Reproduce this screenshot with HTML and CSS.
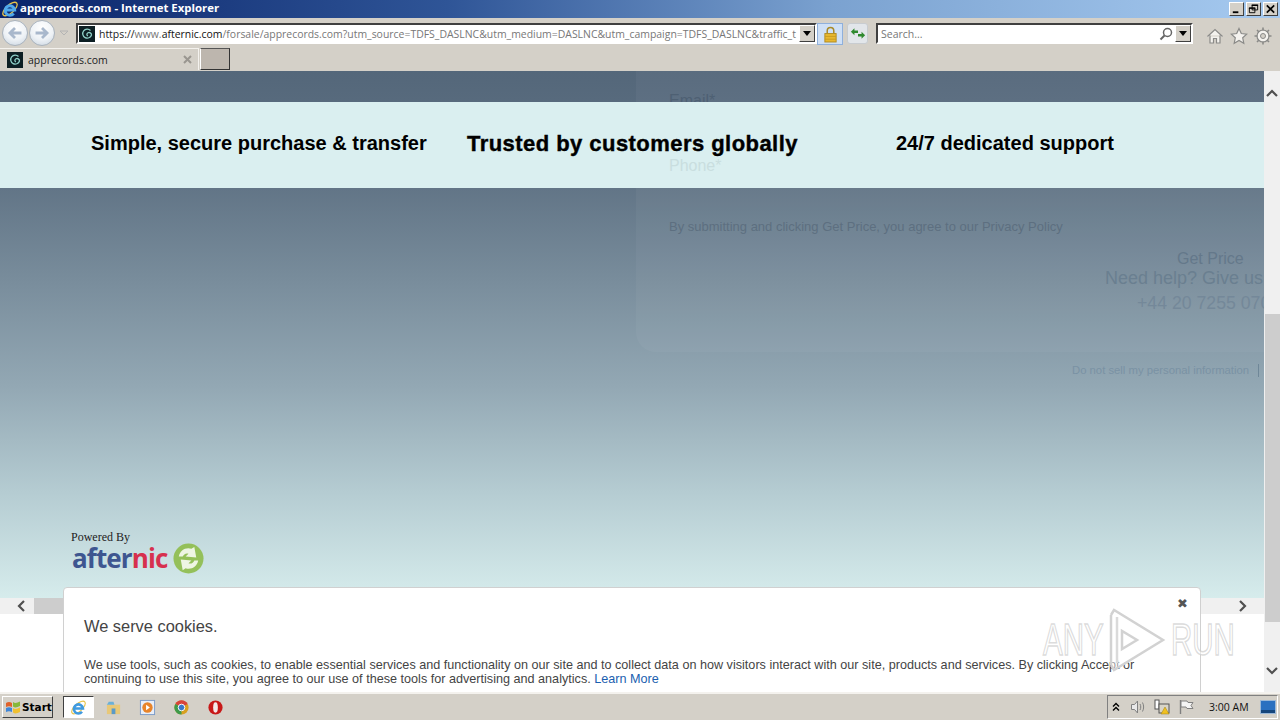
FILE: index.html
```html
<!DOCTYPE html>
<html lang="en">
<head>
<meta charset="utf-8">
<title>apprecords.com - Internet Explorer</title>
<link rel="stylesheet" href="styles.css">
</head>
<body>
<div class="window">
  <header class="titlebar">
    <svg class="ie-logo" viewBox="0 0 18 18"><ellipse cx="9" cy="9" rx="9" ry="4" transform="rotate(-42 9 9)" fill="none" stroke="#e6c34a" stroke-width="1.300"/><path d="M4.500 10h9.200A4.800 4.800 0 1 0 12.700 13.500" fill="none" stroke="#4fa8ec" stroke-width="2.900"/></svg>
    <span class="title-text">apprecords.com - Internet Explorer</span>
    <div class="winbtns">
      <span class="winbtn"><svg viewBox="0 0 14 13"><rect x="3" y="9" width="6" height="2" fill="#000"/></svg></span>
      <span class="winbtn"><svg viewBox="0 0 14 13"><path d="M5.500 2.500h6v5h-6zM2.500 5.500h6v5h-6z" fill="#d4d0c8" stroke="#000"/><path d="M5 2.500h7M2 5.500h7" stroke="#000" stroke-width="1.500"/></svg></span>
      <span class="winbtn"><svg viewBox="0 0 14 13"><path d="M3 2.500l8 8M11 2.500l-8 8" stroke="#000" stroke-width="1.800"/></svg></span>
    </div>
  </header>

  <div class="navbar">
    <div class="navbtns">
      <span class="navcircle"><svg viewBox="0 0 26 26"><path d="M20 13H8M13 7.500L7.500 13l5.500 5.500" fill="none" stroke="#a9b8cc" stroke-width="3"/></svg></span>
      <span class="navcircle"><svg viewBox="0 0 26 26"><path d="M6 13h12M13 7.500l5.500 5.500-5.500 5.500" fill="none" stroke="#a9b8cc" stroke-width="3"/></svg></span>
      <svg class="nav-drop" viewBox="0 0 10 6"><path d="M1 1l4 4 4-4z" fill="#d4d0c8" stroke="#b4b4b4"/></svg>
    </div>
    <div class="addressbox">
      <svg class="favicon" viewBox="0 0 16 16"><rect width="16" height="16" fill="#0d1f24"/><path d="M11.500 4.500A4.500 4.500 0 1 0 12.500 9c0-2-2-3-3.500-2.200S7.500 9.500 9 10" fill="none" stroke="#8fd0c8" stroke-width="1.300"/></svg>
      <div class="url"><span class="url-scheme">https://</span><span class="url-dim">www.</span><span class="url-dom">afternic.com</span><span class="url-dim">/forsale/apprecords.com?utm_source=TDFS_DASLNC&amp;utm_medium=DASLNC&amp;utm_campaign=TDFS_DASLNC&amp;traffic_t</span></div>
      <span class="dropbtn"><svg viewBox="0 0 8 5"><path d="M0 0h8L4 5z" fill="#000"/></svg></span>
    </div>
    <span class="lockbtn"><svg viewBox="0 0 16 18"><path d="M4.500 8V5a3.500 3.500 0 0 1 7 0v3" fill="none" stroke="#a88a2a" stroke-width="1.600"/><rect x="2" y="8" width="12" height="9" fill="#e8b830" stroke="#b08a20"/><path d="M2 11h12M2 14h12" stroke="#c89a20"/></svg></span>
    <span class="refreshbtn"><svg viewBox="0 0 18 14"><path d="M1 5l4-4v2.500h4v3H5V9zM17 9l-4 4v-2.500H9v-3h4V5z" fill="#2f8a2f"/></svg></span>
    <div class="searchbox">
      <span class="search-text">Search...</span>
      <svg class="magnifier" viewBox="0 0 14 14"><circle cx="8.500" cy="5.500" r="4" fill="none" stroke="#666" stroke-width="1.500"/><path d="M5.500 8.500L1.500 12.500" stroke="#666" stroke-width="2"/></svg>
      <span class="dropbtn"><svg viewBox="0 0 8 5"><path d="M0 0h8L4 5z" fill="#000"/></svg></span>
    </div>
    <div class="tools">
      <svg viewBox="0 0 18 18"><path d="M1.500 9.500L9 2.500l7.500 7M4 8.500v7.500h3.500v-4.500h3V16H14V8.500" fill="#f4f2ee" stroke="#8a8a88" stroke-width="1.200"/></svg>
      <svg viewBox="0 0 18 18"><path d="M9 1.500l2.300 5 5.400.6-4 3.700 1.100 5.400L9 13.400l-4.800 2.800 1.100-5.400-4-3.700 5.400-.6z" fill="#f4f2ee" stroke="#8a8a88" stroke-width="1.200"/></svg>
      <svg viewBox="0 0 18 18"><circle cx="9" cy="9" r="6" fill="#f4f2ee" stroke="#8a8a88" stroke-width="1.200"/><circle cx="9" cy="9" r="2.500" fill="#d4d0c8" stroke="#8a8a88"/><path d="M9 .5v3M9 14.500v3M.5 9h3M14.500 9h3M3 3l2 2M13 13l2 2M15 3l-2 2M5 13l-2 2" stroke="#8a8a88" stroke-width="1.600"/></svg>
    </div>
  </div>

  <div class="tabbar">
    <div class="tab">
      <svg class="favicon" viewBox="0 0 16 16"><rect width="16" height="16" fill="#0d1f24"/><path d="M11.500 4.500A4.500 4.500 0 1 0 12.500 9c0-2-2-3-3.500-2.200S7.500 9.500 9 10" fill="none" stroke="#8fd0c8" stroke-width="1.300"/></svg>
      <span class="tab-title">apprecords.com</span>
      <svg class="tab-close" viewBox="0 0 9 9"><path d="M1 1l7 7M8 1L1 8" stroke="#9a9690" stroke-width="2"/></svg>
    </div>
    <span class="newtab"></span>
  </div>

  <main class="viewport">
    <div class="page">
      <div class="hero">
        <section class="benefits">
          <h2 class="benefit benefit-one">Simple, secure purchase &amp; transfer</h2>
          <h2 class="benefit benefit-two">Trusted by customers globally</h2>
          <h2 class="benefit benefit-three">24/7 dedicated support</h2>
        </section>
        <div class="powered">
          <div class="powered-by">Powered By</div>
          <div class="afternic">
            <span class="logo-word"><span class="logo-after">after</span><span class="logo-nic">nic</span></span>
            <svg class="logo-mark" viewBox="0 0 32 32"><circle cx="16" cy="16" r="15.500" fill="#94c05a"/><path d="M6 14c1-6 7-10 13-8l3-2 2 11-11-1 3-3c-3-1-5 1-6 3zM26 18c-1 6-7 10-13 8l-3 2-2-11 11 1-3 3c3 1 5-1 6-3z" fill="#eef5e4"/></svg>
          </div>
        </div>
        <aside class="quote-panel">
          <div class="field field-email">Email*</div>
          <div class="field field-phone">Phone*</div>
          <p class="consent">By submitting and clicking Get Price, you agree to our Privacy Policy</p>
          <div class="get-price">Get Price</div>
          <div class="help">Need help? Give us a call</div>
          <div class="phone">+44 20 7255 0700</div>
        </aside>
        <div class="donotsell"><span>Do not sell my personal information</span><i class="sep"></i></div>
      </div>
      <div class="hscroll">
        <svg class="chev" viewBox="0 0 10 12"><path d="M8 1L3 6l5 5" fill="none" stroke="#505050" stroke-width="2.200"/></svg>
        <span class="hthumb"></span>
        <svg class="chev chev-right" viewBox="0 0 10 12"><path d="M2 1l5 5-5 5" fill="none" stroke="#505050" stroke-width="2.200"/></svg>
      </div>
      <div class="below"></div>
      <div class="cookie">
        <span class="cookie-close">&#10006;</span>
        <h3 class="cookie-title">We serve cookies.</h3>
        <p class="cookie-body">We use tools, such as cookies, to enable essential services and functionality on our site and to collect data on how visitors interact with our site, products and services. By clicking Accept or continuing to use this site, you agree to our use of these tools for advertising and analytics. <a class="cookie-link" href="#">Learn More</a></p>
      </div>
      <div class="watermark">
        <span class="wm-word">ANY</span>
        <svg viewBox="0 0 58 66"><path d="M3 8v50M3 8l3-5 49 30-49 30-3-5M14 24v18l15-9z" fill="rgba(255,255,255,.5)" stroke="#d2d2d2" stroke-width="2.500"/><path d="M9 10v46" stroke="#dadada" stroke-width="2.500"/></svg>
        <span class="wm-word">RUN</span>
      </div>
    </div>
    <div class="vscroll">
      <svg class="chev chev-up" viewBox="0 0 12 10"><path d="M1 8l5-5 5 5" fill="none" stroke="#505050" stroke-width="2.200"/></svg>
      <span class="vthumb"></span>
      <svg class="chev chev-down" viewBox="0 0 12 10"><path d="M1 2l5 5 5-5" fill="none" stroke="#505050" stroke-width="2.200"/></svg>
    </div>
  </main>

  <footer class="taskbar">
    <span class="start"><svg viewBox="0 0 16 16"><path d="M1 4c2-1.500 4-1.500 6 0v4C5 7 3 7 1 8z" fill="#e0622a"/><path d="M8 3c2 1.500 4 1 7-.5v4.500c-3 1.500-5 2-7 .5z" fill="#86b83a"/><path d="M1 9c2-1 4-1 6 0v4c-2-1-4-1-6 0z" fill="#3f86d8"/><path d="M8 9c2 1.500 4 1 7-.5V13c-3 1.500-5 2-7 .5z" fill="#f0c030"/></svg>Start</span>
    <span class="task task-active"><svg viewBox="0 0 18 18"><ellipse cx="9" cy="9" rx="9" ry="4" transform="rotate(-42 9 9)" fill="none" stroke="#e6c34a" stroke-width="1.200"/><path d="M4.500 10h9.200A4.800 4.800 0 1 0 12.700 13.500" fill="none" stroke="#3f9ae0" stroke-width="2.700"/></svg></span>
    <span class="task"><svg viewBox="0 0 18 18"><path d="M2 6h14v10H2z" fill="#e8c878"/><path d="M2 6l2-3h5l1 3z" fill="#6ab0d8"/><rect x="7" y="10" width="4" height="6" fill="#5a9ac8"/></svg></span>
    <span class="task"><svg viewBox="0 0 18 18"><rect x="1.500" y="1.500" width="15" height="15" fill="#e8eef8" stroke="#7a9ac8"/><circle cx="9" cy="9" r="5.500" fill="#e8842a"/><path d="M7.500 6l4 3-4 3z" fill="#fff"/></svg></span>
    <span class="task"><svg viewBox="0 0 18 18"><circle cx="9" cy="9" r="7.500" fill="#d8a020"/><path d="M9 9L2.500 5.200A7.500 7.500 0 0 1 15.500 5.200z" fill="#d8443a"/><path d="M9 9v7.500A7.500 7.500 0 0 1 2.500 5.200z" fill="#3f9a4a"/><circle cx="9" cy="9" r="3.500" fill="#3a78c8" stroke="#fff"/></svg></span>
    <span class="task"><svg viewBox="0 0 18 18"><circle cx="9" cy="9" r="7.500" fill="#c81818"/><ellipse cx="9" cy="9" rx="2.500" ry="5.500" fill="#f4e8e8"/></svg></span>
    <div class="tray">
      <svg class="tray-icon tray-up" viewBox="0 0 8 10"><path d="M1 4.500l3-3 3 3M1 8.500l3-3 3 3" fill="none" stroke="#000" stroke-width="1.400"/></svg>
      <svg class="tray-icon" viewBox="0 0 16 16"><path d="M1.500 5.500h3l3-3.500v12l-3-3.500h-3z" fill="#e8e8e8" stroke="#808080"/><path d="M10 5c1 2 1 4 0 6M12.500 3.500c1.500 3 1.500 6 0 9" fill="none" stroke="#808080"/></svg>
      <svg class="tray-icon" viewBox="0 0 16 16"><rect x="1" y="1" width="4" height="9" fill="#fff" stroke="#555"/><rect x="5" y="5" width="10" height="9" fill="#d8d4c8" stroke="#555"/><path d="M11 8l4 7H7z" fill="#f0c020" stroke="#a08010" stroke-width=".5"/></svg>
      <svg class="tray-icon" viewBox="0 0 16 16"><path d="M2.500 1v14" stroke="#808080" stroke-width="1.400"/><path d="M3 2h6l1 1.500h5l-2 3 2 3H9l-1-1.500H3z" fill="#f4f4f4" stroke="#808080"/></svg>
      <span class="clock">3:00 AM</span>
      <svg class="tray-desktop" viewBox="0 0 16 14"><rect x=".5" y=".5" width="15" height="13" fill="#2a70c0" stroke="#9ab8d8"/><path d="M1 10h14v3H1z" fill="#16467c"/></svg>
    </div>
  </footer>
</div>
</body>
</html>
```

FILE: styles.css
```css
* { box-sizing: border-box; }
html, body { margin: 0; height: 100%; overflow: hidden; }
.window {
  width: 1280px; height: 720px;
  display: grid;
  grid-template-rows: 18px 30px 23px 621px 28px;
  background: #d4d0c8;
  font-family: "Open Sans", "Liberation Sans", sans-serif;
}

/* Title bar */
.titlebar {
  display: flex; align-items: center;
  background: linear-gradient(90deg, #0a246a 0%, #2f5597 35%, #7ba2d0 65%, #a6caf0 100%);
  padding-left: 1px;
}
.ie-logo { width: 18px; height: 18px; flex: none; }
.title-text { color: #fff; font: bold 11.400px/16px "Open Sans", sans-serif; margin: 0 0 2px 1px; white-space: nowrap; }
.winbtns { display: flex; gap: 2px; margin-left: auto; padding-right: 2px; }
.winbtn {
  width: 15px; height: 14px; background: #d4d0c8;
  border: 1px solid; border-color: #fff #404040 #404040 #fff; display: block;
}
.winbtn svg { display: block; width: 13px; height: 12px; }

/* Navigation */
.navbar { display: flex; align-items: flex-start; padding: 5px 0 0 2px; }
.navbtns { display: flex; align-items: center; width: 74px; height: 20px; flex: none; }
.navcircle {
  width: 26px; height: 26px; border-radius: 50%; margin-right: 1px; flex: none;
  background: radial-gradient(circle at 50% 30%, #ffffff 0%, #eef2f6 55%, #c6d2de 100%);
  border: 1px solid #a9b3be;
}
.navcircle svg { display: block; width: 24px; height: 24px; }
.nav-drop { width: 10px; height: 6px; margin-left: 3px; flex: none; }
.addressbox {
  width: 741px; height: 21px; background: #fff; display: flex; align-items: center;
  border: 2px solid; border-color: #404040 #fff #fff #404040;
  padding-left: 1px;
}
.favicon { width: 16px; height: 16px; flex: none; }
.url {
  flex: 1; min-width: 0; overflow: hidden; white-space: nowrap;
  font-size: 10.450px; margin-left: 4px;
}
.url-scheme { color: #222; }
.url-dim { color: #777; }
.url-dom { color: #111; }
.dropbtn {
  width: 16px; height: 17px; flex: none; background: #d4d0c8; display: flex;
  align-items: center; justify-content: center;
  border: 1px solid; border-color: #fff #404040 #404040 #fff;
}
.dropbtn svg { width: 8px; height: 5px; }
.lockbtn {
  width: 26px; height: 22px; flex: none; display: flex;
  align-items: center; justify-content: center;
  background: #cfe0f6; border: 1px solid #8fb0dc;
}
.lockbtn svg { width: 15px; height: 17px; }
.refreshbtn {
  width: 21px; height: 21px; margin-left: 4px; flex: none; display: flex;
  align-items: center; justify-content: center;
  background: #e2e6ea; border: 1px solid #c8ccd0; border-radius: 3px;
}
.refreshbtn svg { width: 16px; height: 13px; }
.searchbox {
  width: 317px; height: 21px; margin-left: 8px; flex: none; background: #fff;
  display: flex; align-items: center;
  border: 2px solid; border-color: #404040 #fff #fff #404040; padding-left: 3px;
}
.search-text { font-size: 10.500px; color: #777; flex: 1; }
.magnifier { width: 14px; height: 14px; margin-right: 2px; }
.tools { display: flex; gap: 6px; margin-left: 13px; padding-top: 4px; }
.tools svg { width: 18px; height: 18px; display: block; }

/* Tabs */
.tabbar { display: flex; align-items: flex-start; }
.tab {
  width: 199px; height: 22px; display: flex; align-items: center; padding: 0 6px 0 7px;
  border-top: 1px solid #f4f2ee; border-right: 1px solid #f4f2ee;
}
.tab-title { font-size: 10.500px; color: #222; margin-left: 5px; }
.tab-close { width: 9px; height: 9px; margin-left: auto; }
.newtab {
  width: 30px; height: 22px; margin-left: 1px; background: #bdb6ae;
  border: 1px solid; border-color: #555 #333 #333 #fff;
}

/* Viewport */
.viewport { display: flex; min-height: 0; overflow: hidden; background: #fff; }
.page {
  position: relative; width: 1264px; flex: none; display: flex; flex-direction: column;
  overflow: hidden;
}
.hero {
  height: 527px; flex: none; position: relative; overflow: hidden; padding-top: 31px;
  background: linear-gradient(180deg, #54677a 0%, #5f7284 20%, #93a8b4 60%, #b5ccd2 80%, #d6ecec 100%);
}
.benefits {
  display: flex; height: 86px; align-items: center; position: relative; z-index: 2;
  background: #daeff0; padding: 0 0 4px 91px;
}
.benefit { margin: 0; color: #000; font-family: "Liberation Sans", Arial, sans-serif; white-space: nowrap; font-weight: 700; }
.benefit-one { font-size: 20px; width: 376px; }
.benefit-two { font-size: 22px; width: 429px; margin-top: 2px; letter-spacing: .45px; -webkit-text-stroke: .4px #000; }
.benefit-three { font-size: 20px; }

.powered { position: absolute; left: 71px; top: 458px; }
.powered-by { font: 12px/16px "Liberation Serif", serif; color: #222; }
.afternic { display: flex; align-items: center; gap: 6px; margin-top: -2px; padding-left: 1px; }
.logo-word { font: 700 26px/31px "Open Sans", sans-serif; letter-spacing: -.9px; }
.logo-after { color: #3e5690; }
.logo-nic { color: #d7304e; }
.logo-mark { width: 31px; height: 31px; flex: none; }

.quote-panel {
  position: absolute; left: 636px; top: 0; width: 700px; height: 281px;
  background: rgba(255, 255, 255, .04);
  border-radius: 0 0 0 20px;
  padding-left: 33px; font-family: "Liberation Sans", Arial, sans-serif;
  white-space: nowrap;
}
.field { font-size: 16px; line-height: 18px; color: #4e6073; }
.field-email { margin-top: 21px; }
.field-phone { margin-top: 47px; position: relative; z-index: 3; color: #c9dedf; }
.consent { margin: 44px 0 0; font-size: 13px; line-height: 16px; color: #5d6f80; }
.get-price { margin: 15px 0 0 508px; font-size: 16px; line-height: 18px; color: #64788a; }
.help { margin: 0 0 0 436px; font-size: 18px; line-height: 20px; color: #6a7f90; }
.phone { margin: 5px 0 0 468px; font-size: 17.700px; line-height: 20px; color: #748899; }
.donotsell {
  position: absolute; left: 1072px; top: 292px; display: flex; align-items: center; gap: 9px;
  font: 11.300px/14px "Liberation Sans", Arial, sans-serif; color: #7a92a4; white-space: nowrap;
}
.sep { width: 1px; height: 13px; background: #6f8798; display: block; }

.hscroll { height: 16px; background: #f0f0f0; display: flex; align-items: center; flex: none; padding: 0 16px; }
.hthumb { flex: none; width: 1150px; height: 16px; background: #cdcdcd; margin-left: 8px; }
.chev { display: block; flex: none; }
.hscroll .chev { width: 10px; height: 12px; }
.chev-right { margin-left: auto; }
.below { flex: 1; background: #fff; }

.vscroll { width: 16px; background: #f0f0f0; display: flex; flex-direction: column; align-items: center; }
.vscroll .chev { width: 12px; height: 10px; }
.chev-up { margin-top: 17px; }
.vthumb { width: 15px; height: 308px; background: #cdcdcd; margin: 216px 0 0 1px; flex: none; }
.chev-down { margin-top: 44px; }

.cookie {
  position: absolute; left: 63px; top: 516px; width: 1138px; height: 110px;
  background: #fff; border: 1px solid #d0d0d0; border-radius: 4px 4px 0 0;
  padding: 29px 20px 0; font-family: "Liberation Sans", Arial, sans-serif; color: #444;
}
.cookie-close { position: absolute; right: 12px; top: 8px; font-size: 13px; line-height: 16px; color: #555; font-family: "DejaVu Sans", sans-serif; }
.cookie-title { margin: 0; font-size: 16.400px; line-height: 18px; font-weight: 400; }
.cookie-body { margin: 23px 0 0; font-size: 12.630px; line-height: 14px; }
.cookie-link { color: #1b5fb0; text-decoration: none; }

.watermark {
  position: absolute; left: 1043px; top: 536px; display: flex; align-items: center; gap: 5px;
  font: 44px/66px "Liberation Sans", Arial, sans-serif;
}
.wm-word {
  display: block; width: 60px; transform: scaleX(.67); transform-origin: left center;
  color: rgba(255,255,255,.5); -webkit-text-stroke: 1.500px rgba(200,200,200,.65);
}
.watermark svg { width: 58px; height: 66px; }

/* Taskbar */
.taskbar {
  display: flex; align-items: center; padding: 0 2px;
  border-top: 2px solid #f4f2ee;
}
.start {
  width: 51px; height: 22px; display: flex; align-items: center; gap: 1px; padding-left: 2px;
  font: bold 10.500px "DejaVu Sans", sans-serif; color: #000; background: #d4d0c8;
  border: 1px solid; border-color: #fff #404040 #404040 #fff;
  margin-right: 10px;
}
.start svg { width: 16px; height: 16px; }
.task { width: 34px; height: 22px; display: flex; align-items: center; justify-content: center; flex: none; }
.task svg { width: 17px; height: 17px; }
.task-active { width: 31px; background: #fff; border: 1px solid; border-color: #404040 #fff #fff #404040; margin-right: 2px; }
.tray {
  margin-left: auto; width: 171px; height: 24px; display: flex; align-items: center;
  border: 1px solid; border-color: #808080 #fff #fff #808080; padding-left: 4px;
}
.tray-icon { width: 16px; height: 16px; flex: none; margin-right: 8px; }
.tray-up { width: 8px; height: 10px; margin-right: 10px; }
.clock { font-size: 10.500px; color: #111; margin-left: 7px; white-space: nowrap; }
.tray-desktop { width: 16px; height: 14px; margin-left: auto; margin-right: 1px; }
```
